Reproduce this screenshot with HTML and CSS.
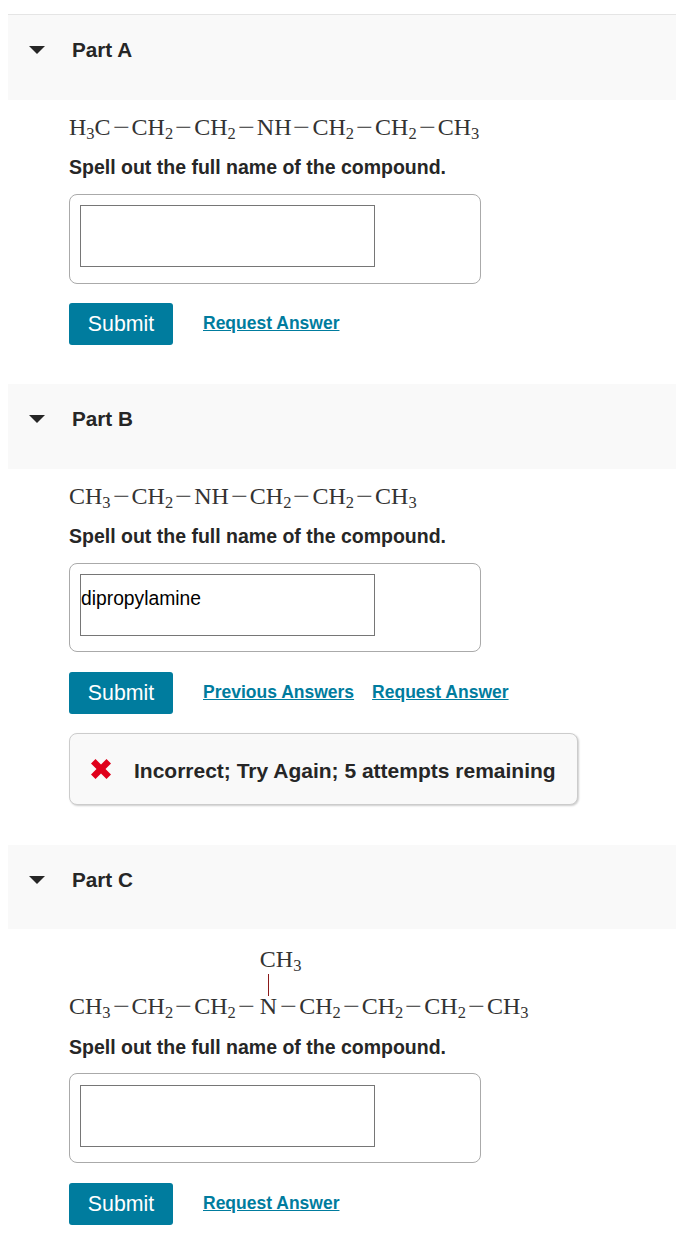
FILE: index.html
```html
<!DOCTYPE html>
<html lang="en">
<head>
  <meta charset="UTF-8">
  <meta name="viewport" content="width=device-width, initial-scale=1.0">
  <title>Parts</title>
  <link rel="stylesheet" href="styles.css">
</head>
<body>

<div class="container">

  <!-- Part A -->
  <section class="part">
    <div class="part-header">
      <span class="arrow"></span>
      <h2>Part A</h2>
    </div>
    <div class="part-body">
      <div class="formula">
        <span>H<sub>3</sub>C</span><span class="bond">−</span><span>CH<sub>2</sub></span><span class="bond">−</span><span>CH<sub>2</sub></span><span class="bond">−</span><span>NH</span><span class="bond">−</span><span>CH<sub>2</sub></span><span class="bond">−</span><span>CH<sub>2</sub></span><span class="bond">−</span><span>CH<sub>3</sub></span>
      </div>
      <p class="prompt">Spell out the full name of the compound.</p>
      <div class="answer-box">
        <input type="text" class="answer-input">
      </div>
      <div class="actions">
        <button class="submit-button">Submit</button>
        <a href="#" class="action-link">Request Answer</a>
      </div>
    </div>
  </section>

  <!-- Part B -->
  <section class="part part-answered">
    <div class="part-header">
      <span class="arrow"></span>
      <h2>Part B</h2>
    </div>
    <div class="part-body">
      <div class="formula">
        <span>CH<sub>3</sub></span><span class="bond">−</span><span>CH<sub>2</sub></span><span class="bond">−</span><span>NH</span><span class="bond">−</span><span>CH<sub>2</sub></span><span class="bond">−</span><span>CH<sub>2</sub></span><span class="bond">−</span><span>CH<sub>3</sub></span>
      </div>
      <p class="prompt">Spell out the full name of the compound.</p>
      <div class="answer-box">
        <input type="text" class="answer-input" value="dipropylamine">
      </div>
      <div class="actions">
        <button class="submit-button">Submit</button>
        <a href="#" class="action-link">Previous Answers</a>
        <a href="#" class="action-link">Request Answer</a>
      </div>
      <div class="feedback">
        <svg class="cross" viewBox="0 0 20 20" width="20" height="20">
          <path d="M4.5 0 L10 5.5 L15.5 0 L20 4.5 L14.5 10 L20 15.5 L15.5 20 L10 14.5 L4.5 20 L0 15.5 L5.5 10 L0 4.5 Z" fill="#e0001b"/>
        </svg>
        <span class="feedback-text">Incorrect; Try Again; 5 attempts remaining</span>
      </div>
    </div>
  </section>

  <!-- Part C -->
  <section class="part part-branched">
    <div class="part-header">
      <span class="arrow"></span>
      <h2>Part C</h2>
    </div>
    <div class="part-body">
      <div class="formula">
        <span>CH<sub>3</sub></span><span class="bond">−</span><span>CH<sub>2</sub></span><span class="bond">−</span><span>CH<sub>2</sub></span><span class="bond">−</span><span class="branch-atom">N<span class="branch"><span>CH<sub>3</sub></span><span class="branch-line"></span></span></span><span class="bond">−</span><span>CH<sub>2</sub></span><span class="bond">−</span><span>CH<sub>2</sub></span><span class="bond">−</span><span>CH<sub>2</sub></span><span class="bond">−</span><span>CH<sub>3</sub></span>
      </div>
      <p class="prompt">Spell out the full name of the compound.</p>
      <div class="answer-box">
        <input type="text" class="answer-input">
      </div>
      <div class="actions">
        <button class="submit-button">Submit</button>
        <a href="#" class="action-link">Request Answer</a>
      </div>
    </div>
  </section>

</div>

</body>
</html>
```

FILE: styles.css
```css
body {
  font-family: "Liberation Sans", Arial, sans-serif;
  color: #262626;
  background-color: #ffffff;
  margin: 0;
  padding: 14px 0 0 8px;
}
.container {
  border-top: 1px solid #e5e5e5;
}
.part {
  margin-bottom: 39px;
}
.part-header {
  display: flex;
  align-items: flex-start;
  height: 85px;
  padding: 23px 0 0 21px;
  box-sizing: border-box;
  background-color: #f9f9f9;
}
.part-header h2 {
  margin: 0;
  font-size: 20.7px;
  line-height: 23px;
  font-weight: bold;
}
.arrow {
  width: 0;
  height: 0;
  margin: 8px 27px 0 0;
  border-left: 8px solid transparent;
  border-right: 8px solid transparent;
  border-top: 8px solid #262626;
}
.part-body {
  padding: 12px 0 0 61px;
}
.formula {
  display: flex;
  align-items: baseline;
  font-family: "Liberation Serif", "Times New Roman", serif;
  font-size: 24px;
  line-height: 30px;
  color: #333333;
}
.formula sub {
  font-size: 16.5px;
  line-height: 0;
  vertical-align: -4px;
}
.bond {
  width: 21px;
  text-align: center;
  transform: scaleX(1.25);
}
.branch-atom {
  position: relative;
  margin: 0 1px 0 3px;
}
.branch {
  position: absolute;
  left: 0;
  bottom: 25px;
  display: flex;
  flex-direction: column;
  white-space: nowrap;
}
.branch-line {
  width: 1px;
  height: 22px;
  margin-left: 8px;
  background-color: #8b1a1a;
}
.prompt {
  margin: 14px 0 15px;
  font-size: 19.5px;
  line-height: 23px;
  font-weight: bold;
}
.answer-box {
  box-sizing: border-box;
  width: 412px;
  height: 90px;
  padding: 10px;
  border: 1px solid #aaaaaa;
  border-radius: 8px;
}
.answer-input {
  display: block;
  box-sizing: border-box;
  width: 295px;
  height: 62px;
  padding: 0 0 12px 0;
  border: 1px solid #767676;
  border-radius: 0;
  font-family: "Liberation Sans", Arial, sans-serif;
  font-size: 19.3px;
  color: #000000;
}
.actions {
  display: flex;
  align-items: center;
  margin-top: 19px;
}
.submit-button {
  width: 104px;
  height: 42px;
  margin-right: 30px;
  background-color: #007c9e;
  color: #ffffff;
  border: none;
  border-radius: 3px;
  font-family: "Liberation Sans", Arial, sans-serif;
  font-size: 21.3px;
}
.action-link {
  margin-right: 18px;
  margin-top: -1px;
  font-size: 17.5px;
  font-weight: bold;
  color: #007c9e;
}
.feedback {
  display: flex;
  align-items: center;
  box-sizing: border-box;
  width: 509px;
  height: 72px;
  margin: 19px 0 40px;
  padding-left: 21px;
  background-color: #f9f9f9;
  border: 1px solid #cccccc;
  border-radius: 8px;
  box-shadow: 1px 1px 2px rgba(0, 0, 0, 0.2);
  font-size: 21px;
  font-weight: bold;
}
.cross {
  margin-right: 23px;
}
.feedback-text {
  margin-top: 4px;
}

/* Part B box is a pixel shorter */
.part-answered .answer-box {
  height: 89px;
}
.part-answered .actions {
  margin-top: 20px;
}

/* Part C has a branch above the chain, so everything sits lower */
.part-branched .part-header {
  height: 84px;
}
.part-branched .part-body {
  padding-top: 62px;
}
.part-branched .prompt {
  margin: 15px 0 14px;
}
.part-branched .answer-box {
  padding-top: 11px;
}
.part-branched .actions {
  margin-top: 20px;
}
```
